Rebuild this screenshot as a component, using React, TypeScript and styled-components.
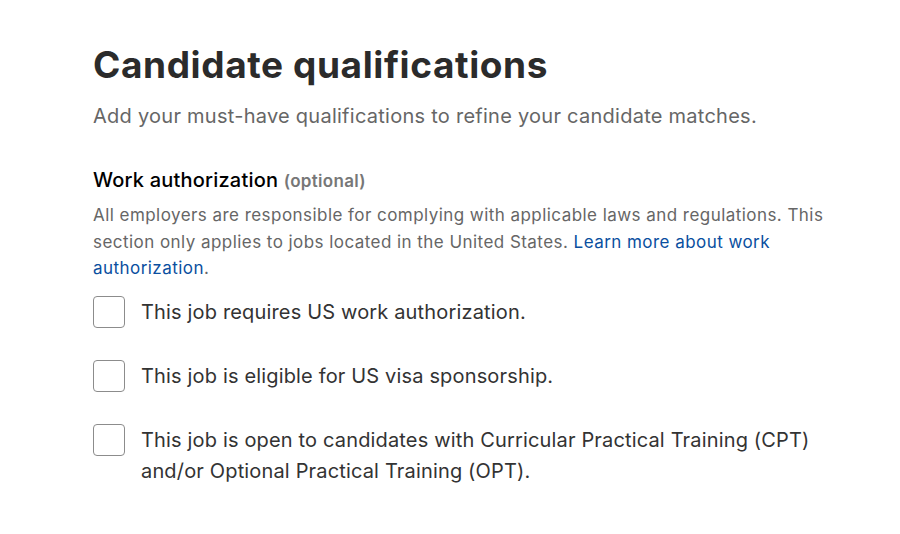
import { FC } from "react";
import styled, { createGlobalStyle } from "styled-components";

const GlobalStyle = createGlobalStyle`
	html, body {
		margin: 0;
		padding: 0;
		background: #ffffff;
	}

	body {
		font-family: Inter, "Noto Sans", "Liberation Sans", sans-serif;
		-webkit-font-smoothing: antialiased;
	}
`;

const Page = styled.main`
	width: 900px;
	height: 534px;
	box-sizing: border-box;
	padding: 42px 60px 0 93px;
	background: #ffffff;
`;

const Title = styled.h1`
	margin: 0;
	font-size: 37px;
	line-height: 46px;
	font-weight: 700;
	letter-spacing: 0.6px;
	color: #2b2b2b;
`;

const Subtitle = styled.p`
	margin: 14px 0 0;
	font-size: 20px;
	line-height: 28px;
	font-weight: 400;
	letter-spacing: 0.26px;
	color: #666666;
`;

const Section = styled.section`
	margin-top: 36px;
`;

const SectionTitle = styled.h2`
	margin: 0;
	font-size: 20px;
	line-height: 28px;
	font-weight: 500;
	letter-spacing: 0.2px;
	color: #000000;
`;

const Optional = styled.span`
	font-size: 17px;
	font-weight: 600;
	letter-spacing: 0.3px;
	color: #777777;
`;

const Help = styled.p`
	margin: 7px 0 0;
	font-size: 17px;
	line-height: 26.5px;
	letter-spacing: 0.45px;
	color: #666666;
	max-width: 740px;
`;

const Link = styled.a`
	color: #0a4fa0;
	text-decoration: none;
`;

const Options = styled.div`
	display: flex;
	flex-direction: column;
	gap: 32px;
	margin-top: 14px;
`;

const Option = styled.label`
	display: flex;
	align-items: flex-start;
	gap: 16px;
	cursor: pointer;
`;

const Box = styled.span<{ $checked?: boolean }>`
	flex: none;
	width: 32px;
	height: 32px;
	box-sizing: border-box;
	border: 1px solid #8c8c8c;
	border-radius: 4px;
	background: ${(p) => (p.$checked ? "#0a66c2" : "#ffffff")};
`;

const OptionText = styled.span`
	font-size: 20px;
	line-height: 31px;
	letter-spacing: 0.16px;
	color: #333333;
	padding-top: 1px;
	max-width: 690px;
`;

const options = [
	"This job requires US work authorization.",
	"This job is eligible for US visa sponsorship.",
	"This job is open to candidates with Curricular Practical Training (CPT) and/or Optional Practical Training (OPT).",
];

const App: FC = () => {
	return (
		<>
			<GlobalStyle />
			<Page>
				<Title>Candidate qualifications</Title>
				<Subtitle>
					Add your must-have qualifications to refine your candidate
					matches.
				</Subtitle>

				<Section>
					<SectionTitle>
						Work authorization <Optional>(optional)</Optional>
					</SectionTitle>
					<Help>
						All employers are responsible for complying with applicable
						laws and regulations. This section only applies to jobs
						located in the United States.{" "}
						<Link href="#">Learn more about work authorization</Link>.
					</Help>

					<Options>
						{options.map((text) => (
							<Option key={text}>
								<Box />
								<OptionText>{text}</OptionText>
							</Option>
						))}
					</Options>
				</Section>
			</Page>
		</>
	);
};

export default App;
